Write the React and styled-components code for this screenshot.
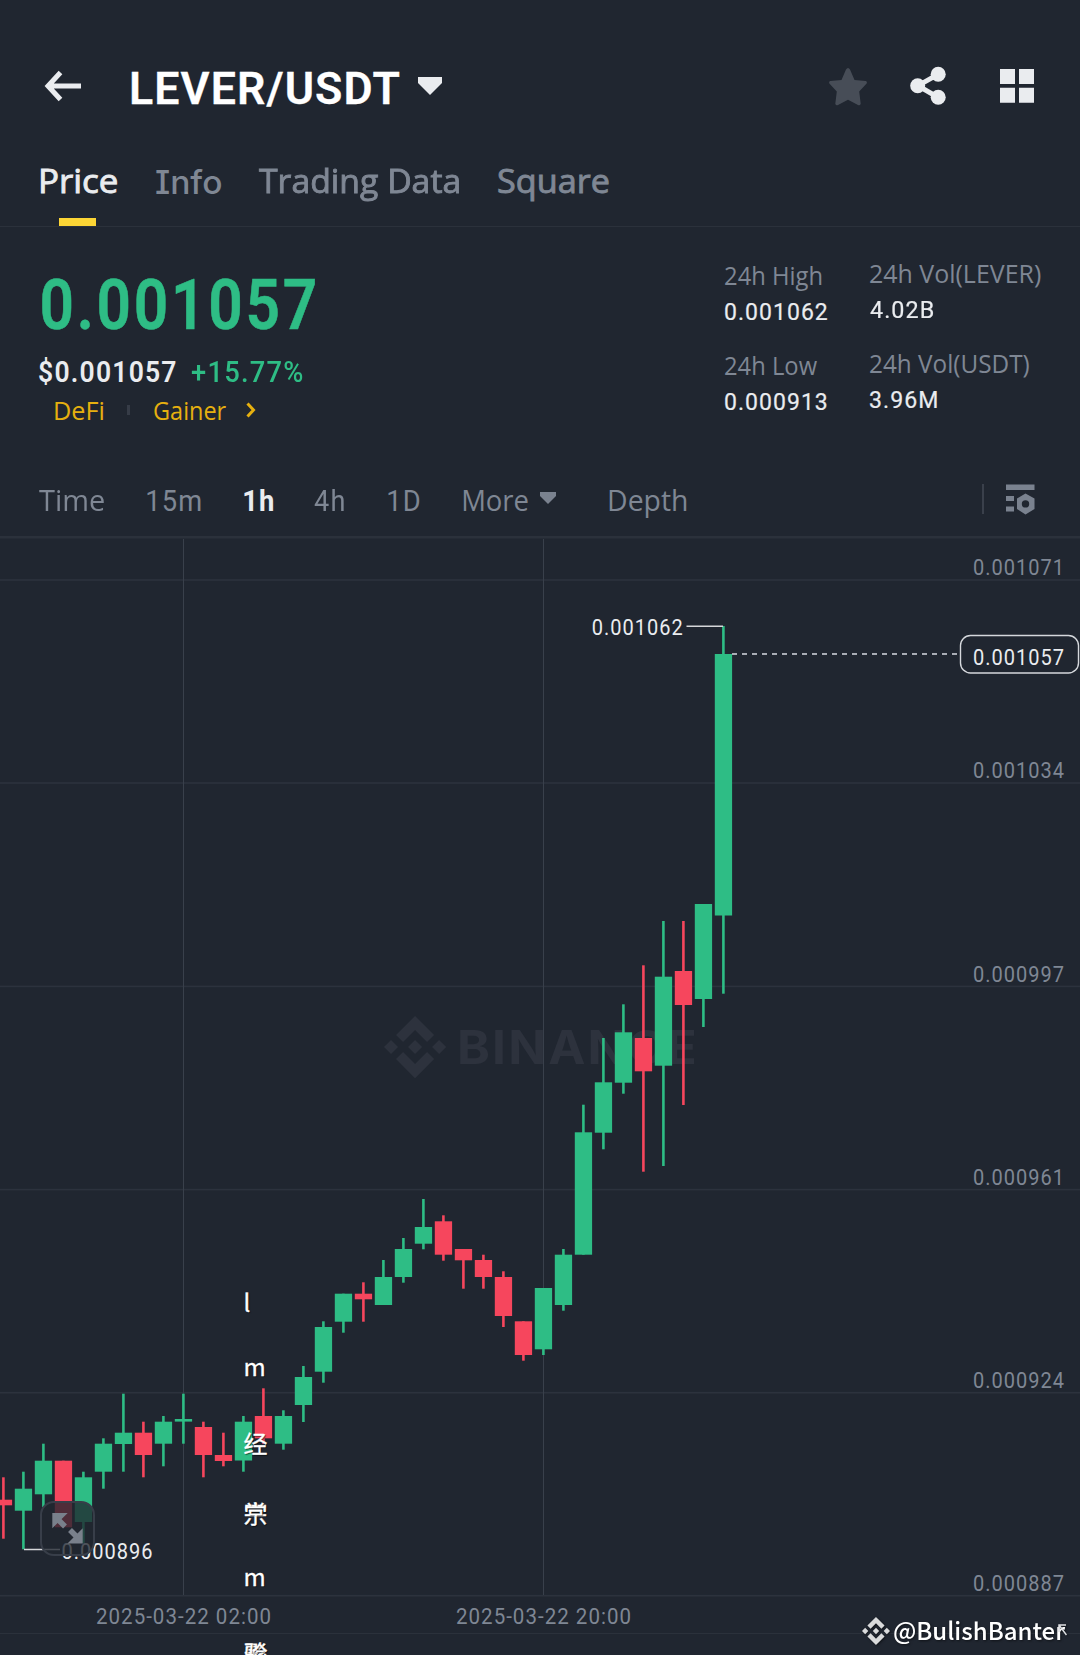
import React, { useLayoutEffect, useRef, useState } from "react";
import styled, { createGlobalStyle } from "styled-components";

const c = {
  bg: "#202630",
  line: "#2b313b",
  grid: "#2c323d",
  text: "#eaecef",
  muted: "#7f8794",
  dim: "#474d57",
  green: "#2ebd85",
  red: "#f6465d",
  gold: "#e6b00f",
  yellow: "#fcd535",
};

const sans = `"Open Sans", "Noto Sans", sans-serif`;
const din = `Roboto, "Liberation Sans", sans-serif`;
const inter = `Inter, "Open Sans", sans-serif`;
const cjk = `"Noto Sans CJK SC", "Noto Sans", sans-serif`;

const GlobalStyle = createGlobalStyle`
  * { box-sizing: border-box; }
  body { margin: 0; background: ${c.bg}; }
`;

const Screen = styled.main`
  width: 1080px;
  height: 1655px;
  overflow: hidden;
  display: flex;
  flex-direction: column;
  background: ${c.bg};
  color: ${c.text};
  font-family: ${sans};
`;

/* Condensed label: the glyphs are squeezed so their ink fills the given width */
const FitBox = styled.span`
  display: block;
  flex: none;
  width: ${(p) => p.$width}px;
  padding-top: ${(p) => p.$drop}px;
  font-family: ${(p) => p.$family};
  font-size: ${(p) => p.$size}px;
  font-weight: ${(p) => p.$weight};
  letter-spacing: ${(p) => p.$track}px;
  color: ${(p) => p.$color};
  line-height: ${(p) => p.$lh}px;
  font-feature-settings: ${(p) => (p.$serifI ? '"cv08"' : "normal")};
  -webkit-text-stroke: ${(p) => p.$stroke}px currentColor;
  white-space: nowrap;
`;
const FitInner = styled.span`
  display: inline-block;
  transform-origin: 0 50%;
`;

function Fit({ children, width, size, weight = 400, color = c.text, lh, num, family, serifI, drop = 0, stroke = 0, tracking = 0.045 }) {
  const ref = useRef(null);
  const [transform, setTransform] = useState("none");
  const track = num ? size * tracking : 0;
  useLayoutEffect(() => {
    const s = getComputedStyle(ref.current);
    const ctx = document.createElement("canvas").getContext("2d");
    ctx.font = `${s.fontWeight} ${s.fontSize} ${s.fontFamily}`;
    const m = ctx.measureText(children);
    const ink = m.actualBoundingBoxRight + m.actualBoundingBoxLeft + track * (children.length - 1);
    const k = width / ink;
    setTransform(`translateX(${m.actualBoundingBoxLeft * k}px) scaleX(${k})`);
  }, [children, width, track]);
  return (
    <FitBox
      $width={width}
      $size={size}
      $weight={weight}
      $color={color}
      $lh={lh}
      $family={family || (num ? din : sans)}
      $track={track}
      $serifI={serifI}
      $drop={drop}
      $stroke={stroke}
    >
      <FitInner ref={ref} style={{ transform }}>{children}</FitInner>
    </FitBox>
  );
}

const Header = styled.header`
  height: 148px;
  padding: 24px 46px 0 44px;
  display: flex;
  align-items: center;
`;
const Back = styled.svg`width: 38px; height: 32px; margin-right: 49px;`;
const Caret = styled.svg`
  flex: none;
  width: ${(p) => p.$w}px;
  height: ${(p) => p.$h}px;
  margin-left: ${(p) => p.$gap}px;
  margin-bottom: ${(p) => p.$lift}px;
  fill: ${(p) => p.$color};
`;
const Actions = styled.div`
  margin-left: auto;
  display: flex;
  align-items: center;
`;
const ActionIcon = styled.svg`
  width: ${(p) => p.$w}px;
  height: 40px;
  margin-left: ${(p) => p.$gap}px;
  fill: ${(p) => p.$color};
`;

const Tabs = styled.nav`
  height: 79px;
  padding-left: 41px;
  display: flex;
  border-bottom: 1px solid ${c.line};
`;
const Tab = styled.div`
  margin-right: ${(p) => p.$gap}px;
  display: flex;
  flex-direction: column;
  justify-content: space-between;
`;
const Underline = styled.i`
  width: 37px;
  height: 8px;
  margin-left: 18px;
  background: ${c.yellow};
`;

const Summary = styled.section`
  height: 237px;
  display: flex;
  padding-left: 39px;
`;
const PriceBlock = styled.div`
  width: 686px;
  padding-top: 38px;
`;
const BigPrice = styled.div`padding-left: 2.5px;`;
const SubPrice = styled.div`
  margin-top: 9px;
  display: flex;
  gap: 15px;
`;
const Tags = styled.div`
  margin-top: 5px;
  padding-left: 16px;
  display: flex;
  align-items: center;
`;
const TagRule = styled.i`
  width: 3px;
  height: 10px;
  margin: 0 24px 0 23px;
  background: #363c47;
`;
const Chevron = styled.svg`
  width: 10px;
  height: 16px;
  margin-left: 20px;
`;
const StatColumn = styled.div`
  width: ${(p) => p.$w}px;
  padding-top: ${(p) => p.$top}px;
  display: flex;
  flex-direction: column;
  gap: 18.5px;
`;

const Intervals = styled.nav`
  height: 72px;
  padding: 0 45px 0 38.5px;
  display: flex;
  align-items: center;
`;
const Interval = styled.div`
  display: flex;
  align-items: center;
  margin-right: ${(p) => p.$gap}px;
`;
const ToolRule = styled.i`
  width: 2px;
  height: 30px;
  margin: 0 21px 2px auto;
  background: #3a404b;
`;
const ToolIcon = styled.svg`
  width: 30px;
  height: 32px;
  margin-bottom: 1px;
  fill: #7a828f;
`;

const ChartArea = styled.section`
  position: relative;
  height: 1119px;
  overflow: hidden;
`;
const ChartSvg = styled.svg`
  display: block;
  width: 1080px;
  height: 1119px;
  font-family: ${din};
`;
const ExpandButton = styled.button`
  position: absolute;
  left: 40px;
  top: 965px;
  width: 55px;
  height: 55px;
  padding: 0;
  border: 2px solid #383e49;
  border-radius: 14px;
  background: rgba(32, 38, 48, 0.78);
`;
const ExpandIcon = styled.svg`
  display: block;
  width: 51px;
  height: 51px;
  fill: #79808b;
`;
const SideText = styled.div`
  position: absolute;
  left: 243.5px;
  top: 731px;
  display: flex;
  flex-direction: column;
  font: 400 24px/70px ${cjk};
  -webkit-text-stroke: 0.3px #fff;
  color: #fff;
  text-shadow: 1px 1px 1px rgba(0, 0, 0, 0.6);
`;
const SideChar = styled.span`
  height: ${(p) => p.$h}px;
`;
const Overprint = styled.span`
  display: grid;
  height: ${(p) => p.$h}px;
  > span { grid-area: 1 / 1; }
`;
const UpperHalf = styled.span`
  clip-path: inset(0 0 45% 0);
`;
const Signature = styled.div`
  position: absolute;
  left: 862px;
  top: 1077px;
  display: flex;
  align-items: center;
  gap: 3px;
  color: #fff;
  filter: drop-shadow(1px 1px 1px rgba(0, 0, 0, 0.5));
  font: 500 24px/34px ${cjk};
`;
const SignatureLogo = styled.svg`width: 28px; height: 28px; margin-top: 1px; fill: #d9dadb;`;
const Handle = styled.span`white-space: nowrap;`;
const Cursor = styled.svg`
  width: 9px;
  height: 12px;
  margin-left: -10px;
  margin-top: -1px;
`;

const LOGO =
  "M16.624 13.9202l2.7175 2.7154-7.353 7.353-7.353-7.352 2.7175-2.7164 4.6355 4.6595 4.6356-4.6595zm4.6366-4.6366L24 12l-2.7154 2.7164L18.5682 12l2.6924-2.7164zm-9.272.001l2.7163 2.6914-2.7164 2.7174v-.001L9.2721 12l2.7164-2.7154zm-9.2722-.001L5.4088 12l-2.6914 2.6924L0 12l2.7164-2.7164zM11.9885.0115l7.353 7.329-2.7174 2.7154-4.6356-4.6356-4.6355 4.6595-2.7174-2.7154 7.353-7.353z";

/* [wick top, body top, body bottom, wick bottom, rising] */
const CANDLES = [
  [1477.3, 1499.7, 1505.3, 1538.7, 0],
  [1471.7, 1488.7, 1510.7, 1549.3, 1],
  [1443.7, 1460.7, 1494.3, 1507, 1],
  [1460.7, 1460.7, 1527.3, 1527.3, 0],
  [1471.7, 1477.3, 1522, 1543, 1],
  [1438.3, 1443.7, 1471.7, 1488.7, 1],
  [1393.7, 1432.7, 1444, 1471.7, 1],
  [1421.7, 1432.7, 1455, 1477.3, 0],
  [1416, 1421.7, 1443.7, 1466.3, 1],
  [1393.7, 1419, 1421.6, 1443.7, 1],
  [1421.7, 1427, 1455, 1477.3, 0],
  [1432.7, 1455, 1461, 1466.3, 0],
  [1416, 1421.7, 1460.5, 1471.7, 1],
  [1388.3, 1416, 1438.3, 1444, 0],
  [1410.3, 1416, 1443.7, 1449.7, 1],
  [1366, 1377, 1405, 1422, 1],
  [1321.3, 1327, 1371.7, 1382.7, 1],
  [1293.7, 1293.7, 1321.7, 1332.7, 1],
  [1282.3, 1293.7, 1299.3, 1321.7, 0],
  [1260, 1277, 1305, 1305, 1],
  [1238, 1249, 1277, 1282.7, 1],
  [1199, 1227, 1243.7, 1249.3, 1],
  [1215.3, 1221.3, 1254.7, 1260.7, 0],
  [1249, 1249, 1260.3, 1288.7, 0],
  [1254.7, 1260, 1277, 1288.7, 0],
  [1271.3, 1277, 1316, 1327, 0],
  [1321.3, 1321.3, 1355, 1360.7, 0],
  [1288, 1288, 1349.3, 1355, 1],
  [1249, 1254.7, 1305, 1310.7, 1],
  [1104.7, 1132.3, 1254.7, 1254.7, 1],
  [1038, 1082.3, 1132.7, 1149.3, 1],
  [1004.3, 1032.3, 1082.7, 1093.7, 1],
  [965.3, 1038, 1071.3, 1171.7, 0],
  [921, 976.7, 1065.7, 1166, 1],
  [921, 971, 1005, 1105, 0],
  [904, 904, 999, 1027, 1],
  [626, 654, 915.5, 993.7, 1],
];

const LEVELS = [
  [580, "0.001071"],
  [783, "0.001034"],
  [986.4, "0.000997"],
  [1189.6, "0.000961"],
  [1392.7, "0.000924"],
  [1595.7, "0.000887"],
];

/* Chart figure, tracked out and fitted to the width it takes on the axis */
function Figure({ x, y, width = 92, children }) {
  return (
    <text x={x} y={y} fontSize="22" letterSpacing="1.1" textLength={width} lengthAdjust="spacingAndGlyphs">
      {children}
    </text>
  );
}

function Chart() {
  return (
    <ChartSvg viewBox="0 536 1080 1119">
      <rect x="0" y="536" width="1080" height="2.500" fill={c.line} />
      {LEVELS.map(([y]) => (
        <rect key={y} x="0" y={y - 0.8} width="1080" height="1.6" fill={c.grid} />
      ))}
      <rect x="0" y="1633" width="1080" height="1" fill={c.line} />
      {[183, 543].map((x) => (
        <rect key={x} x={x} y="539" width="1" height="1056" fill="#39404b" />
      ))}
      <g fill="#2d323d">
        <path d={LOGO} transform="translate(384 1016) scale(2.59)" />
        <text x="457" y="1064" fontFamily="Inter, sans-serif" fontWeight="700" fontSize="47" letterSpacing="2" textLength="242" lengthAdjust="spacingAndGlyphs">
          BINANCE
        </text>
      </g>
      {CANDLES.map(([hi, top, bot, lo, up], i) => {
        const x = 3.4 + i * 20;
        return (
          <g key={i} fill={up ? c.green : c.red}>
            <rect x={x - 1.3} y={hi} width="2.6" height={lo - hi} />
            <rect x={x - 8.6} y={top} width="17.3" height={bot - top} />
          </g>
        );
      })}
      <g fill={c.muted}>
        {LEVELS.map(([y, t]) => (
          <Figure key={t} x={973} y={y - 4.6}>{t}</Figure>
        ))}
        <Figure x={96} y={1624} width={176}>2025-03-22 02:00</Figure>
        <Figure x={456} y={1624} width={176}>2025-03-22 20:00</Figure>
      </g>
      <path d="M686.5 626.3H723M24 1549.5H60" stroke="#d5d7da" strokeWidth="1.5" />
      <path d="M732 654H958" stroke="#a9adb5" strokeWidth="1.8" strokeDasharray="5 5" />
      <rect x="960.5" y="635.5" width="118" height="37.5" rx="10" fill={c.bg} stroke="#d5d8dc" strokeWidth="1.4" />
      <g fill={c.text}>
        <Figure x={591.7} y={634.7}>0.001062</Figure>
        <Figure x={61.5} y={1559}>0.000896</Figure>
        <Figure x={973} y={664.7}>0.001057</Figure>
      </g>
    </ChartSvg>
  );
}

const TABS = [["Price", 76.5, 39], ["Info", 58.5, 44], ["Trading Data", 199.5, 39], ["Square", 111, 0]];
const INTERVALS = [["Time", 65.7, 42.5], ["15m", 53.5, 43.5], ["1h", 29, 41.5], ["4h", 30.2, 44], ["1D", 31.5, 43.5], ["More", 65.5, 53], ["Depth", 77.5, 0]];

function Stat({ label, labelWidth, value, valueWidth }) {
  return (
    <div>
      <Fit size={24.6} lh={35.5} width={labelWidth} color={c.muted}>{label}</Fit>
      <Fit num size={24.6} lh={35.5} drop={0.5} width={valueWidth} stroke={0.2}>{value}</Fit>
    </div>
  );
}

export default function App() {
  return (
    <Screen>
      <GlobalStyle />
      <Header>
        <Back viewBox="0 0 38 32" fill="none" stroke={c.text} strokeWidth="5">
          <path d="M37 16H5M16.500 2.500L4 16l12.500 13.500" />
        </Back>
        <Fit num size={43.8} weight={600} lh={60} drop={5.5} tracking={0.025} stroke={0.3} width={268} color="#fff">LEVER/USDT</Fit>
        <Caret viewBox="0 0 24 18" $w={24} $h={18} $gap={19} $lift={1} $color={c.text}>
          <path d="M0 0h24v6L12 18 0 6z" />
        </Caret>
        <Actions>
          <ActionIcon viewBox="0 0 38 40" $w={38} $gap={0} $color={c.dim}>
            <path d="M17 3.500Q19 .5 21 3.500L25.500 14l11.200 1q2 .8.7 2.800L30.200 25.500l1.500 12.300q-.8 2.200-2.700 1.200L19 33.800 9 39q-2 1-2.700-1.200L7.800 25.500.6 17.800Q-.7 15.800 1.300 15l11.200-1z" />
          </ActionIcon>
          <ActionIcon viewBox="0 0 36 40" $w={36} $gap={43.5} $color={c.text}>
            <path d="M28 8.300L8 19.700l20 11.600" fill="none" stroke={c.text} strokeWidth="5" />
            <circle cx="28.200" cy="8.300" r="7.500" />
            <circle cx="7.700" cy="19.700" r="7.500" />
            <circle cx="28.200" cy="31.300" r="7.500" />
          </ActionIcon>
          <ActionIcon viewBox="0 0 34 40" $w={34} $gap={54} $color={c.text}>
            <path d="M0 3h15v15H0zM19 3h15v15H19zM0 21.700h15v15H0zM19 21.700h15v15H19z" />
          </ActionIcon>
        </Actions>
      </Header>

      <Tabs>
        {TABS.map(([t, w, gap], i) => {
          const info = t === "Info";
          return (
            <Tab key={t} $gap={gap}>
              <Fit
                size={info ? 33 : 33.6}
                weight={info ? 500 : 400}
                stroke={info ? 0 : 0.9}
                drop={info ? 1.5 : 0}
                lh={64}
                width={w}
                family={info ? inter : sans}
                serifI={info}
                color={i ? c.muted : c.text}
              >
                {t}
              </Fit>
              {i === 0 && <Underline />}
            </Tab>
          );
        })}
      </Tabs>

      <Summary>
        <PriceBlock>
          <BigPrice>
            <Fit num size={70} weight={600} lh={80} stroke={0.6} width={273.5} color={c.green}>0.001057</Fit>
          </BigPrice>
          <SubPrice>
            <Fit num size={29} weight={600} lh={36} width={137}>$0.001057</Fit>
            <Fit num size={29} weight={500} lh={36} width={112} color={c.green}>+15.77%</Fit>
          </SubPrice>
          <Tags>
            <Fit size={25} lh={30} width={48.5} color={c.gold}>DeFi</Fit>
            <TagRule />
            <Fit size={25} lh={30} width={72} color={c.gold}>Gainer</Fit>
            <Chevron viewBox="0 0 10 16" fill="none" stroke={c.gold} strokeWidth="3">
              <path d="M1.500 1.500L7.500 8l-6 6.500" />
            </Chevron>
          </Tags>
        </PriceBlock>
        <StatColumn $w={145} $top={30.5}>
          <Stat label="24h High" labelWidth={97} value="0.001062" valueWidth={102} />
          <Stat label="24h Low" labelWidth={92} value="0.000913" valueWidth={102} />
        </StatColumn>
        <StatColumn $w={172} $top={28.5}>
          <Stat label="24h Vol(LEVER)" labelWidth={171} value="4.02B" valueWidth={63} />
          <Stat label="24h Vol(USDT)" labelWidth={159.5} value="3.96M" valueWidth={67} />
        </StatColumn>
      </Summary>

      <Intervals>
        {INTERVALS.map(([t, w, gap]) => {
          const numeric = /\d/.test(t);
          return (
            <Interval key={t} $gap={gap}>
              <Fit size={29.5} num={numeric} drop={numeric ? 2 : 0} weight={t === "1h" ? 700 : 400} lh={40} width={w} color={t === "1h" ? c.text : c.muted}>
                {t}
              </Fit>
              {t === "More" && (
                <Caret viewBox="0 0 16 12" $w={16} $h={12} $gap={11} $lift={5} $color="#7a828f">
                  <path d="M0 0h16v4l-8 8-8-8z" />
                </Caret>
              )}
            </Interval>
          );
        })}
        <ToolRule />
        <ToolIcon viewBox="0 0 30 32">
          <path d="M1 0.500h28.500v5.500H1zM1 12h8v5H1zM1 22.500h8v5H1z" />
          <path fillRule="evenodd" d="M20.500 9.500l9 5v10.500l-9 5.500-8.500-5.500v-10.500zM20.500 16.200a3.700 3.700 0 100 7.400 3.700 3.700 0 000-7.400z" />
        </ToolIcon>
      </Intervals>

      <ChartArea>
        <Chart />
        <ExpandButton>
          <ExpandIcon viewBox="42 1503 51 51">
            <path d="M52.300 1513h15.400L52.300 1528.300zM82.700 1528.300v15.200H67.500z" />
            <path d="M56 1517.500l9 9M70 1530l8 8" stroke="#79808b" strokeWidth="5.500" />
          </ExpandIcon>
        </ExpandButton>
        <SideText>
          <SideChar $h={64}>l</SideChar>
          <SideChar $h={77}>m</SideChar>
          <SideChar $h={70}>经</SideChar>
          <Overprint $h={63}>
            <span>宗</span>
            <UpperHalf>常</UpperHalf>
          </Overprint>
          <SideChar $h={77}>m</SideChar>
          <Overprint $h={70}>
            <span>影</span>
            <span>验</span>
          </Overprint>
        </SideText>
        <Signature>
          <SignatureLogo viewBox="0 0 24 24"><path d={LOGO} /></SignatureLogo>
          <Handle>@BulishBanter</Handle>
          <Cursor viewBox="0 0 9 12" fill="none" stroke="#dfe1e4" strokeWidth="1.500">
            <path d="M8 1H1v7M1 1l7.500 10" />
          </Cursor>
        </Signature>
      </ChartArea>
    </Screen>
  );
}
